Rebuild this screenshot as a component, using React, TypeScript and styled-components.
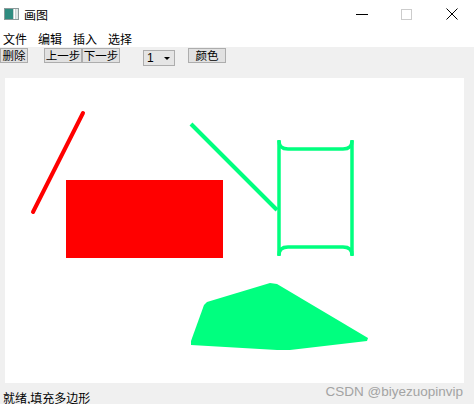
import React from "react";
import styled, { createGlobalStyle } from "styled-components";

const GlobalStyle = createGlobalStyle`
  html, body {
    margin: 0;
    padding: 0;
    width: 474px;
    height: 404px;
    overflow: hidden;
    background: #ffffff;
    font-family: "Noto Sans CJK SC", "Microsoft YaHei", sans-serif;
  }
`;

const Window = styled("div")({
  width: "474px",
  height: "404px",
  display: "flex",
  flexDirection: "column",
  position: "relative",
  overflow: "hidden",
});

const TitleBar = styled("div")({
  height: "28px",
  display: "flex",
  alignItems: "center",
  background: "#ffffff",
  paddingLeft: "4px",
  flexShrink: 0,
});

const Title = styled("span")({
  fontSize: "12px",
  lineHeight: "12px",
  color: "#000",
  marginLeft: "5px",
  marginTop: "1px",
});

const Controls = styled("div")({
  marginLeft: "auto",
  display: "flex",
  height: "28px",
});

const ControlButton = styled("div")({
  width: "45px",
  height: "28px",
  display: "flex",
  alignItems: "center",
  justifyContent: "center",
});

const MenuBar = styled("div")({
  height: "19px",
  display: "flex",
  alignItems: "center",
  gap: "11px",
  paddingLeft: "3px",
  background: "#ffffff",
  flexShrink: 0,
});

const MenuItem = styled("span")({
  fontSize: "12px",
  lineHeight: "12px",
  color: "#000",
  marginTop: "2px",
});

const Body = styled("div")({
  flex: 1,
  background: "#f0f0f0",
  display: "flex",
  flexDirection: "column",
});

const ToolRow = styled("div")({
  height: "31px",
  display: "flex",
  alignItems: "flex-start",
  paddingTop: "1px",
  boxSizing: "border-box",
});

const ToolButton = styled("div")<{ gap?: number; w: number }>(({ gap, w }) => ({
  marginLeft: `${gap ?? 0}px`,
  width: `${w}px`,
  height: "15px",
  boxSizing: "border-box",
  border: "1px solid #adadad",
  background: "#e1e1e1",
  fontSize: "11.5px",
  lineHeight: "13px",
  color: "#000",
  display: "flex",
  justifyContent: "center",
}));

const Combo = styled("div")({
  marginLeft: "23px",
  marginTop: "2px",
  width: "32px",
  height: "16px",
  boxSizing: "border-box",
  border: "1px solid #adadad",
  background: "#e5e5e5",
  display: "flex",
  alignItems: "center",
  paddingLeft: "3px",
  fontFamily: "\"Liberation Sans\", Arial, sans-serif",
  fontSize: "12px",
  color: "#000",
});

const ComboArrow = styled("span")({
  marginLeft: "auto",
  marginRight: "4px",
  width: 0,
  height: 0,
  borderLeft: "3px solid transparent",
  borderRight: "3px solid transparent",
  borderTop: "3px solid #000",
});

const CanvasWrap = styled("div")({
  paddingLeft: "5px",
  paddingRight: "10px",
  height: "305px",
  flexShrink: 0,
});

const Canvas = styled("svg")({
  display: "block",
  width: "459px",
  height: "305px",
  background: "#ffffff",
});

const StatusBar = styled("div")({
  paddingLeft: "3px",
  paddingTop: "9px",
  fontSize: "12px",
  lineHeight: "12px",
  color: "#000",
});

const Watermark = styled("div")({
  position: "absolute",
  right: "11px",
  top: "384px",
  fontFamily: "\"Liberation Sans\", Arial, sans-serif",
  fontSize: "13.5px",
  color: "#a3a3a3",
});

const RED = "#ff0000";
const GREEN = "#00ff7f";

const AppIcon = () => (
  <svg width="15" height="12" viewBox="0 0 15 12">
    <rect x="0.5" y="0.5" width="14" height="11" fill="#c8d2d2" stroke="#8c9a9a" />
    <rect x="1" y="1" width="8" height="10" fill="#2f8c80" />
    <rect x="10" y="1" width="1" height="10" fill="#ffffff" />
    <rect x="12" y="1" width="2" height="10" fill="#dfe6e6" />
  </svg>
);

const App: React.FC = () => (
  <>
    <GlobalStyle />
    <Window>
      <TitleBar>
        <AppIcon />
        <Title>画图</Title>
        <Controls>
          <ControlButton>
            <svg width="12" height="12" viewBox="0 0 12 12">
              <line x1="0" y1="6.5" x2="12" y2="6.5" stroke="#000" strokeWidth="1" />
            </svg>
          </ControlButton>
          <ControlButton>
            <svg width="11" height="11" viewBox="0 0 11 11">
              <rect x="0.5" y="0.5" width="10" height="10" fill="none" stroke="#cccccc" />
            </svg>
          </ControlButton>
          <ControlButton>
            <svg width="12" height="12" viewBox="0 0 12 12">
              <path d="M0.5 0.5 L11.5 11.5 M11.5 0.5 L0.5 11.5" stroke="#000" strokeWidth="1" />
            </svg>
          </ControlButton>
        </Controls>
      </TitleBar>
      <MenuBar>
        <MenuItem>文件</MenuItem>
        <MenuItem>编辑</MenuItem>
        <MenuItem>插入</MenuItem>
        <MenuItem>选择</MenuItem>
      </MenuBar>
      <Body>
        <ToolRow>
          <ToolButton w={28}>删除</ToolButton>
          <ToolButton gap={16} w={38}>上一步</ToolButton>
          <ToolButton w={38}>下一步</ToolButton>
          <Combo>
            1<ComboArrow />
          </Combo>
          <ToolButton gap={13} w={38}>颜色</ToolButton>
        </ToolRow>
        <CanvasWrap>
          <Canvas viewBox="0 0 459 305">
            <g transform="translate(-5 -78)">
              <line x1="83" y1="113" x2="33" y2="212" stroke={RED} strokeWidth="4" strokeLinecap="round" />
              <rect x="66" y="180" width="157" height="78" fill={RED} />
              <line x1="191" y1="124" x2="277" y2="210" stroke={GREEN} strokeWidth="4" />
              <g fill="none" stroke={GREEN} strokeWidth="3.5">
                <line x1="279" y1="140" x2="279" y2="256" />
                <line x1="352" y1="140" x2="352" y2="256" />
                <path d="M279 141 Q279 149 288 149 L343 149 Q352 149 352 141" />
                <path d="M279 255 Q279 247 288 247 L343 247 Q352 247 352 255" />
              </g>
              <polygon
                points="207,302 270,283 277,284 368,338 367,341 290,350 277,350 191,345 191,341 204,305"
                fill={GREEN}
              />
            </g>
          </Canvas>
        </CanvasWrap>
        <StatusBar>就绪,填充多边形</StatusBar>
      </Body>
      <Watermark>CSDN @biyezuopinvip</Watermark>
    </Window>
  </>
);

export default App;
